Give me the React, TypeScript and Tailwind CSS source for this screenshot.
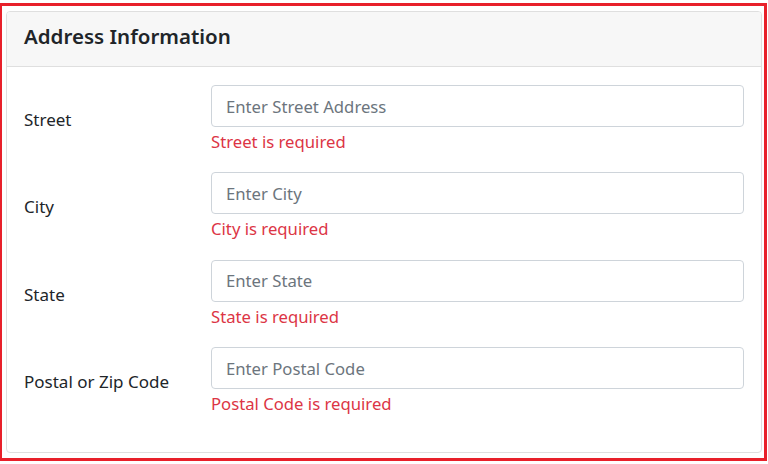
import React from "react";

const fields = [
  { label: "Street", placeholder: "Enter Street Address", error: "Street is required" },
  { label: "City", placeholder: "Enter City", error: "City is required" },
  { label: "State", placeholder: "Enter State", error: "State is required" },
  { label: "Postal or Zip Code", placeholder: "Enter Postal Code", error: "Postal Code is required" },
];

const App = () => {
  return (
    <div className="w-[768px] h-[464px] bg-white pt-[3px] font-['Noto_Sans',sans-serif] text-[#212529]">
      <div className="w-[767px] h-[458px] border-[3px] border-l-2 border-[#e8202a] pl-[4px] pr-[2px] pt-[5px] pb-[5px] flex flex-col">
        <div className="flex-1 flex flex-col border border-[#dfdfdf] rounded-[4px] overflow-hidden">
          <div className="h-[55px] flex items-center px-[17px] pb-[6px] bg-[#f7f7f7] border-b border-[#dfdfdf]">
            <h2 className="text-[20.5px] leading-[28px] font-semibold">Address Information</h2>
          </div>
          <div className="flex flex-col px-[17px] pt-[18px]">
            {fields.map((f) => (
              <div key={f.label} className="flex items-center mb-[18.4px]">
                <label className="w-[187px] text-[17px]">{f.label}</label>
                <div className="flex-1 flex flex-col">
                  <input
                    type="text"
                    placeholder={f.placeholder}
                    className="h-[42px] px-[14px] border border-[#ced4da] rounded-[4px] text-[16.7px] placeholder:text-[#6c757d] outline-none"
                  />
                  <span className="h-[27px] leading-[29px] text-[16.7px] text-[#dc3545]">{f.error}</span>
                </div>
              </div>
            ))}
          </div>
        </div>
      </div>
    </div>
  );
};

export default App;
